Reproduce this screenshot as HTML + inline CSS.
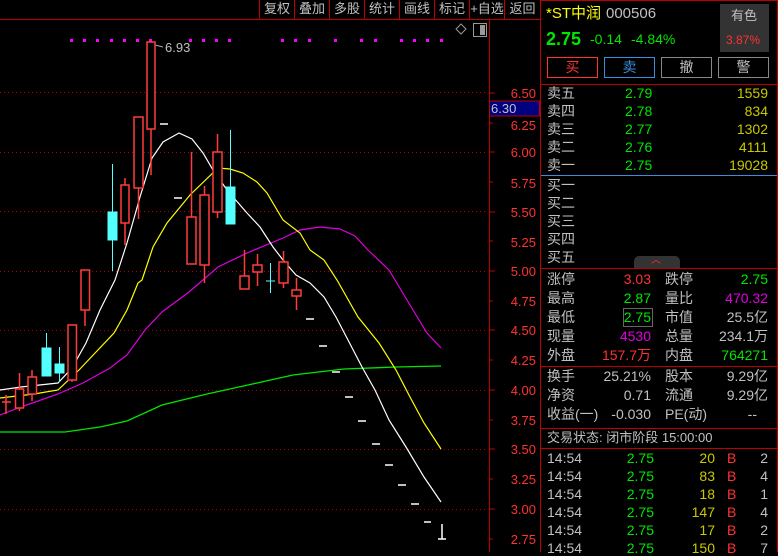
<!DOCTYPE html>
<html><head><meta charset="utf-8"><style>
*{margin:0;padding:0;box-sizing:border-box}
body{width:778px;height:552px;background:#000;overflow:hidden;position:relative;font-family:"Liberation Sans","Noto Sans CJK SC",sans-serif;color:#c0c0c0}
.a{position:absolute;white-space:nowrap;line-height:1}
.t{font-size:14px}
.g{color:#00e600}.r{color:#ff3232}.y{color:#c8c800}.m{color:#e000e0}.w{color:#c0c0c0}
.R{text-align:right}
.hl{position:absolute;height:1px;background:#c00000;left:540px;width:238px}
.tb{position:absolute;top:0;height:19px;font-size:13px;line-height:18px;text-align:center;color:#c0c0c0;border-left:1px solid #c00000}
</style></head><body>
<svg width="540" height="552" style="position:absolute;left:0;top:0" xmlns="http://www.w3.org/2000/svg">
<line x1="0" y1="19.5" x2="540" y2="19.5" stroke="#c00000"/>
<line x1="489.5" y1="19" x2="489.5" y2="552" stroke="#c00000"/>
<g stroke="#b00000" stroke-dasharray="1 3" stroke-width="1">
<line x1="0" y1="92.5" x2="488" y2="92.5"/><line x1="0" y1="152.5" x2="488" y2="152.5"/><line x1="0" y1="211.5" x2="488" y2="211.5"/><line x1="0" y1="271.5" x2="488" y2="271.5"/><line x1="0" y1="330.5" x2="488" y2="330.5"/><line x1="0" y1="390.5" x2="488" y2="390.5"/><line x1="0" y1="449.5" x2="488" y2="449.5"/><line x1="0" y1="509.5" x2="488" y2="509.5"/>
</g>
<g stroke="#c00000"><line x1="489" y1="93" x2="495" y2="93"/><line x1="489" y1="123" x2="493" y2="123"/><line x1="489" y1="152" x2="495" y2="152"/><line x1="489" y1="182" x2="493" y2="182"/><line x1="489" y1="212" x2="495" y2="212"/><line x1="489" y1="241" x2="493" y2="241"/><line x1="489" y1="271" x2="495" y2="271"/><line x1="489" y1="301" x2="493" y2="301"/><line x1="489" y1="330" x2="495" y2="330"/><line x1="489" y1="360" x2="493" y2="360"/><line x1="489" y1="390" x2="495" y2="390"/><line x1="489" y1="420" x2="493" y2="420"/><line x1="489" y1="449" x2="495" y2="449"/><line x1="489" y1="479" x2="493" y2="479"/><line x1="489" y1="509" x2="495" y2="509"/><line x1="489" y1="539" x2="493" y2="539"/></g>
<g font-family="Liberation Sans" font-size="13" fill="#ff3232" text-anchor="end">
<text x="536" y="98">6.50</text><text x="536" y="130">6.25</text><text x="536" y="157">6.00</text><text x="536" y="188">5.75</text><text x="536" y="217">5.50</text><text x="536" y="247">5.25</text><text x="536" y="276">5.00</text><text x="536" y="306">4.75</text><text x="536" y="335">4.50</text><text x="536" y="365">4.25</text><text x="536" y="395">4.00</text><text x="536" y="425">3.75</text><text x="536" y="454">3.50</text><text x="536" y="484">3.25</text><text x="536" y="514">3.00</text><text x="536" y="544">2.75</text>
</g>
<rect x="489.5" y="101" width="50" height="15" fill="#000080" stroke="#c00000"/>
<text x="491" y="113" font-family="Liberation Sans" font-size="13" fill="#c0c0c0">6.30</text>
<path d="M461 24 L466 29 L461 34 L456 29 Z" fill="none" stroke="#999"/>
<rect x="473.5" y="23.5" width="13" height="13" fill="none" stroke="#999"/><rect x="480" y="25" width="5" height="10" fill="#999"/>
<g fill="#ff00ff">
<rect x="70" y="39" width="3" height="3"/><rect x="83" y="39" width="3" height="3"/><rect x="96" y="39" width="3" height="3"/><rect x="110" y="39" width="3" height="3"/><rect x="123" y="39" width="3" height="3"/><rect x="136" y="39" width="3" height="3"/><rect x="149" y="39" width="3" height="3"/><rect x="189" y="39" width="3" height="3"/><rect x="202" y="39" width="3" height="3"/><rect x="215" y="39" width="3" height="3"/><rect x="228" y="39" width="3" height="3"/><rect x="281" y="39" width="3" height="3"/><rect x="294" y="39" width="3" height="3"/><rect x="308" y="39" width="3" height="3"/><rect x="334" y="39" width="3" height="3"/><rect x="360" y="39" width="3" height="3"/><rect x="374" y="39" width="3" height="3"/><rect x="400" y="39" width="3" height="3"/><rect x="413" y="39" width="3" height="3"/><rect x="426" y="39" width="3" height="3"/><rect x="440" y="39" width="3" height="3"/>
</g>
<path d="M151 42 L155 45 L163 47" stroke="#aaa" fill="none"/>
<text x="165" y="52" font-family="Liberation Sans" font-size="13" fill="#c0c0c0">6.93</text>
<!-- MAs -->
<polyline fill="none" stroke="#00e600" stroke-width="1.3" points="0,432 65,432 100,427 127,421 162,405 207,394 248,385 293,375 344,369 396,367 441,366"/>
<polyline fill="none" stroke="#e000e0" stroke-width="1.2" points="0,415 21,407 58,394 83,383 110,368 127,355 145,330 162,312 189,292 203,280 218,267 247,253 283,238 300,230 320,227 340,229 355,236 368,250 389,270 413,310 427,333 441,348"/>
<polyline fill="none" stroke="#ffff00" stroke-width="1.2" points="0,398 34,394 58,390 79,370 114,333 127,310 138,283 142,280 153,247 167,223 190,195 218,168 230,169 243,173 257,182 267,193 283,220 300,233 310,250 324,260 337,280 358,317 379,343 396,370 410,397 424,423 441,449"/>
<polyline fill="none" stroke="#ffffff" stroke-width="1.2" points="0,390 21,387 58,383 72,368 86,343 100,310 115,280 127,243 140,197 152,158 163,142 179,133 192,139 203,153 213,170 227,190 247,213 260,227 273,247 283,260 296,275 310,283 324,297 336,317 348,340 362,367 375,390 389,420 406,447 424,477 441,502"/>
<!-- candles -->
<g stroke="#ff3c3c" stroke-width="1.5" fill="#000">
<line x1="6" y1="395" x2="6" y2="414"/><line x1="2" y1="402" x2="11" y2="402"/>
<line x1="19.5" y1="373" x2="19.5" y2="411"/><rect x="15.5" y="389" width="8" height="19"/>
<line x1="32" y1="370" x2="32" y2="401"/><rect x="28" y="377" width="8.5" height="17"/>
<line x1="72" y1="325" x2="72" y2="382"/><rect x="68" y="325" width="8.5" height="55"/>
<line x1="85" y1="270" x2="85" y2="326"/><rect x="81" y="270" width="8.5" height="40"/>
<line x1="125" y1="178" x2="125" y2="245"/><rect x="121" y="185" width="8" height="38"/>
<line x1="138.5" y1="117" x2="138.5" y2="219"/><rect x="134" y="117" width="9" height="71"/>
<line x1="151" y1="42" x2="151" y2="175"/><rect x="147" y="42" width="8" height="87"/>
<line x1="191.5" y1="152" x2="191.5" y2="264"/><rect x="187" y="217" width="9" height="47"/>
<line x1="204.5" y1="186" x2="204.5" y2="283"/><rect x="200" y="195" width="9" height="70"/>
<line x1="217.5" y1="134" x2="217.5" y2="218"/><rect x="213" y="152" width="9" height="60"/>
<line x1="244.5" y1="250" x2="244.5" y2="289"/><rect x="240" y="276" width="9" height="13"/>
<line x1="257.5" y1="254" x2="257.5" y2="286"/><rect x="253" y="265" width="9" height="7"/>
<line x1="283.5" y1="251" x2="283.5" y2="288"/><rect x="279" y="262" width="9" height="21"/>
<line x1="296.5" y1="278" x2="296.5" y2="310"/><rect x="292" y="290" width="9" height="6"/>
</g>
<g fill="#54ffff" stroke="#54ffff">
<line x1="46.5" y1="333" x2="46.5" y2="376"/><rect x="42" y="348" width="9" height="28"/>
<line x1="59.5" y1="347" x2="59.5" y2="382"/><rect x="55" y="364" width="9" height="9"/>
<line x1="112.5" y1="164" x2="112.5" y2="271"/><rect x="108" y="212" width="9" height="28"/>
<line x1="230.5" y1="130" x2="230.5" y2="224"/><rect x="226" y="187" width="9" height="37"/>
<line x1="270.5" y1="263" x2="270.5" y2="293"/><line x1="266" y1="281" x2="275" y2="281"/>
</g>
<g stroke="#fff" stroke-width="1.5">
<line x1="160" y1="124" x2="168" y2="124"/><line x1="174" y1="198" x2="182" y2="198"/>
<line x1="306" y1="319" x2="314" y2="319"/><line x1="319" y1="346" x2="327" y2="346"/><line x1="332" y1="372" x2="340" y2="372"/><line x1="345" y1="397" x2="353" y2="397"/><line x1="358" y1="421" x2="366" y2="421"/><line x1="372" y1="444" x2="380" y2="444"/><line x1="385" y1="465" x2="393" y2="465"/><line x1="398" y1="485" x2="406" y2="485"/><line x1="411" y1="504" x2="419" y2="504"/><line x1="424" y1="522" x2="431" y2="522"/>
<line x1="442" y1="524" x2="442" y2="539"/><line x1="438" y1="539" x2="446" y2="539"/>
</g>
</svg>
<div class="tb" style="left:259px;width:35px">复权</div>
<div class="tb" style="left:294px;width:35px">叠加</div>
<div class="tb" style="left:329px;width:35px">多股</div>
<div class="tb" style="left:364px;width:35px">统计</div>
<div class="tb" style="left:399px;width:35px">画线</div>
<div class="tb" style="left:434px;width:35px">标记</div>
<div class="tb" style="left:469px;width:35px">+自选</div>
<div class="tb" style="left:504px;width:36px">返回</div>

<!-- right panel -->
<div style="position:absolute;left:540px;top:0;width:238px;height:552px;border-left:1px solid #c00000;border-right:1px solid #c00000;border-top:1px solid #c00000"></div>
<div class="a" style="left:546px;top:6px;font-size:15px;color:#ffff00">*ST中润</div>
<div class="a" style="left:606px;top:6px;font-size:15px;color:#c0c0c0">000506</div>
<div class="a g" style="left:546px;top:30px;font-size:18px;font-weight:bold">2.75</div>
<div class="a g" style="left:590px;top:32px;font-size:14px">-0.14</div>
<div class="a g" style="left:631px;top:32px;font-size:14px">-4.84%</div>
<div style="position:absolute;left:720px;top:4px;width:49px;height:48px;background:#333"></div>
<div class="a" style="left:731px;top:9px;font-size:13px">有色</div>
<div class="a r" style="left:726px;top:34px;font-size:12px">3.87%</div>
<div class="a r" style="left:547px;top:57px;width:51px;height:21px;border:1px solid #ff3232;text-align:center;font-size:14px;line-height:19px">买</div>
<div class="a" style="left:604px;top:57px;width:51px;height:21px;border:1px solid #3c8cdc;text-align:center;font-size:14px;line-height:19px;color:#3c8cdc">卖</div>
<div class="a" style="left:661px;top:57px;width:51px;height:21px;border:1px solid #888;text-align:center;font-size:14px;line-height:19px">撤</div>
<div class="a" style="left:718px;top:57px;width:51px;height:21px;border:1px solid #888;text-align:center;font-size:14px;line-height:19px">警</div>
<div class="hl" style="top:84px"></div>

<div class="a t" style="left:547px;top:86px">卖五</div><div class="a t g" style="left:625px;top:86px">2.79</div><div class="a t y R" style="left:700px;width:68px;top:86px">1559</div>
<div class="a t" style="left:547px;top:104px">卖四</div><div class="a t g" style="left:625px;top:104px">2.78</div><div class="a t y R" style="left:700px;width:68px;top:104px">834</div>
<div class="a t" style="left:547px;top:122px">卖三</div><div class="a t g" style="left:625px;top:122px">2.77</div><div class="a t y R" style="left:700px;width:68px;top:122px">1302</div>
<div class="a t" style="left:547px;top:140px">卖二</div><div class="a t g" style="left:625px;top:140px">2.76</div><div class="a t y R" style="left:700px;width:68px;top:140px">4111</div>
<div class="a t" style="left:547px;top:158px">卖一</div><div class="a t g" style="left:625px;top:158px">2.75</div><div class="a t y R" style="left:700px;width:68px;top:158px">19028</div>
<div style="position:absolute;left:541px;top:175px;width:236px;height:1px;background:#3c8cdc"></div>
<div class="a t" style="left:547px;top:178px">买一</div>
<div class="a t" style="left:547px;top:196px">买二</div>
<div class="a t" style="left:547px;top:214px">买三</div>
<div class="a t" style="left:547px;top:232px">买四</div>
<div class="a t" style="left:547px;top:250px">买五</div>
<div style="position:absolute;left:634px;top:256px;width:46px;height:12px;background:#333;border-radius:5px 5px 0 0"></div>
<div class="a r" style="left:651px;top:256px;font-size:10px">︿</div>
<div class="hl" style="top:268px"></div>

<div class="a t" style="left:547px;top:272px">涨停</div><div class="a t r R" style="left:590px;width:61px;top:272px">3.03</div><div class="a t" style="left:665px;top:272px">跌停</div><div class="a t g R" style="left:700px;width:68px;top:272px">2.75</div>
<div class="a t" style="left:547px;top:291px">最高</div><div class="a t g R" style="left:590px;width:61px;top:291px">2.87</div><div class="a t" style="left:665px;top:291px">量比</div><div class="a t m R" style="left:700px;width:68px;top:291px">470.32</div>
<div class="a t" style="left:547px;top:310px">最低</div><div style="position:absolute;left:623px;top:308px;width:30px;height:19px;border:1px solid #666"></div><div class="a t g R" style="left:590px;width:61px;top:310px">2.75</div><div class="a t" style="left:665px;top:310px">市值</div><div class="a t R" style="left:700px;width:68px;top:310px">25.5亿</div>
<div class="a t" style="left:547px;top:329px">现量</div><div class="a t m R" style="left:590px;width:61px;top:329px">4530</div><div class="a t" style="left:665px;top:329px">总量</div><div class="a t R" style="left:700px;width:68px;top:329px">234.1万</div>
<div class="a t" style="left:547px;top:348px">外盘</div><div class="a t r R" style="left:590px;width:61px;top:348px">157.7万</div><div class="a t" style="left:665px;top:348px">内盘</div><div class="a t g R" style="left:700px;width:68px;top:348px">764271</div>
<div class="hl" style="top:366px"></div>
<div class="a t" style="left:547px;top:369px">换手</div><div class="a t R" style="left:590px;width:61px;top:369px">25.21%</div><div class="a t" style="left:665px;top:369px">股本</div><div class="a t R" style="left:700px;width:68px;top:369px">9.29亿</div>
<div class="a t" style="left:547px;top:388px">净资</div><div class="a t R" style="left:590px;width:61px;top:388px">0.71</div><div class="a t" style="left:665px;top:388px">流通</div><div class="a t R" style="left:700px;width:68px;top:388px">9.29亿</div>
<div class="a t" style="left:547px;top:407px">收益(一)</div><div class="a t R" style="left:590px;width:61px;top:407px">-0.030</div><div class="a t" style="left:665px;top:407px">PE(动)</div><div class="a t R" style="left:700px;width:57px;top:407px">--</div>
<div class="hl" style="top:428px"></div>
<div class="a" style="left:547px;top:431px;font-size:13px">交易状态: 闭市阶段 15:00:00</div>
<div class="hl" style="top:448px"></div>

<div class="a t" style="left:547px;top:451px">14:54</div><div class="a t g R" style="left:600px;width:54px;top:451px">2.75</div><div class="a t y R" style="left:660px;width:55px;top:451px">20</div><div class="a t r" style="left:727px;top:451px">B</div><div class="a t R" style="left:750px;width:18px;top:451px">2</div>
<div class="a t" style="left:547px;top:469px">14:54</div><div class="a t g R" style="left:600px;width:54px;top:469px">2.75</div><div class="a t y R" style="left:660px;width:55px;top:469px">83</div><div class="a t r" style="left:727px;top:469px">B</div><div class="a t R" style="left:750px;width:18px;top:469px">4</div>
<div class="a t" style="left:547px;top:487px">14:54</div><div class="a t g R" style="left:600px;width:54px;top:487px">2.75</div><div class="a t y R" style="left:660px;width:55px;top:487px">18</div><div class="a t r" style="left:727px;top:487px">B</div><div class="a t R" style="left:750px;width:18px;top:487px">1</div>
<div class="a t" style="left:547px;top:505px">14:54</div><div class="a t g R" style="left:600px;width:54px;top:505px">2.75</div><div class="a t y R" style="left:660px;width:55px;top:505px">147</div><div class="a t r" style="left:727px;top:505px">B</div><div class="a t R" style="left:750px;width:18px;top:505px">4</div>
<div class="a t" style="left:547px;top:523px">14:54</div><div class="a t g R" style="left:600px;width:54px;top:523px">2.75</div><div class="a t y R" style="left:660px;width:55px;top:523px">17</div><div class="a t r" style="left:727px;top:523px">B</div><div class="a t R" style="left:750px;width:18px;top:523px">2</div>
<div class="a t" style="left:547px;top:541px">14:54</div><div class="a t g R" style="left:600px;width:54px;top:541px">2.75</div><div class="a t y R" style="left:660px;width:55px;top:541px">150</div><div class="a t r" style="left:727px;top:541px">B</div><div class="a t R" style="left:750px;width:18px;top:541px">7</div>
</body></html>
